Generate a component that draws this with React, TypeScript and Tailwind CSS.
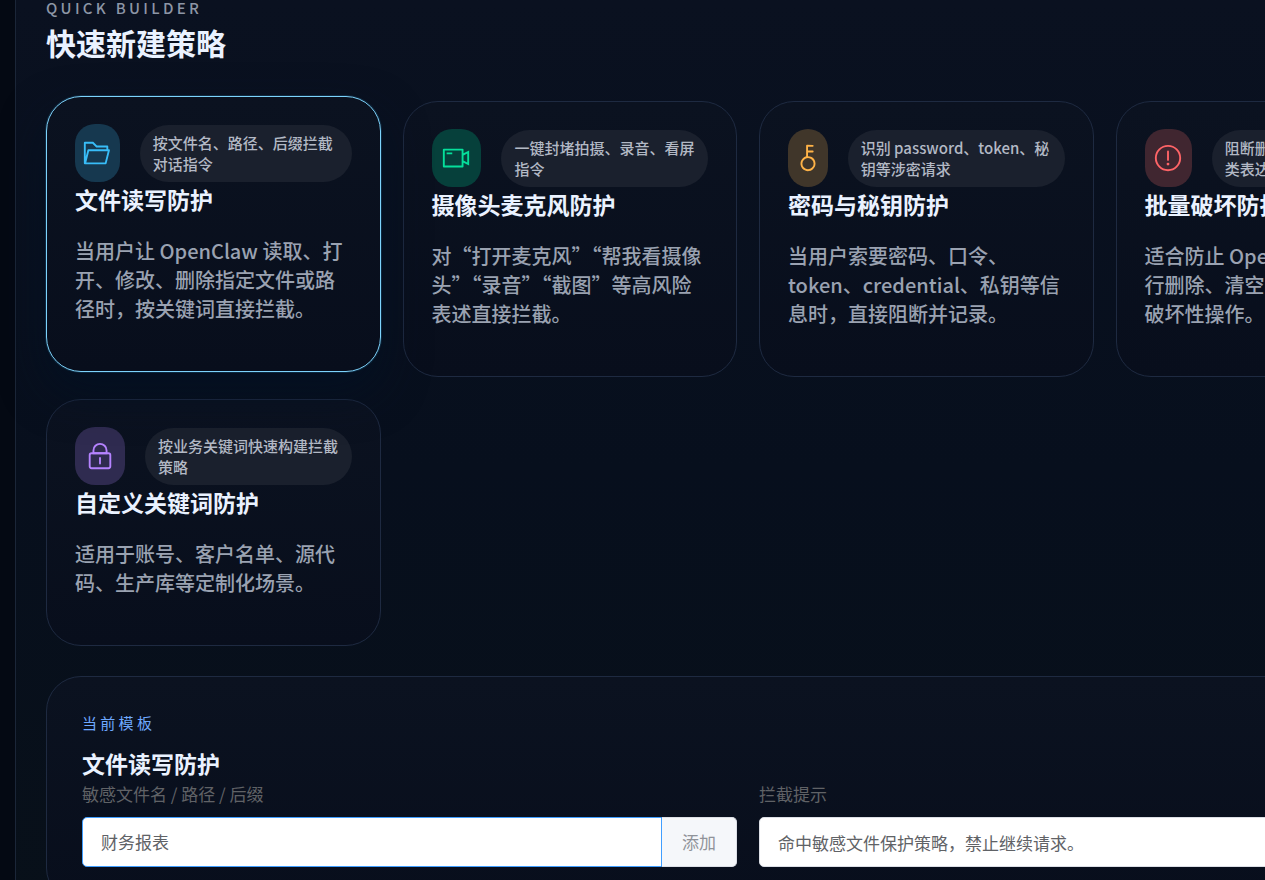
import { useState } from "react";

type Template = {
  id: string;
  title: string;
  tag: string;
  description: string;
  tone: string;
  paths: string[];
};

const templates: Template[] = [
  {
    id: "file",
    title: "文件读写防护",
    tag: "按文件名、路径、后缀拦截对话指令",
    description: "当用户让 OpenClaw 读取、打开、修改、删除指定文件或路径时，按关键词直接拦截。",
    tone: "bg-[#16384f] text-[#38bdf8]",
    paths: [
      "M878.08 448H241.92l-96 384h636.16l96-384zM832 384v-64H485.76L357.504 192H128v448l57.92-231.744A32 32 0 0 1 216.96 384zm-24.96 512H96a32 32 0 0 1-32-32V160a32 32 0 0 1 32-32h287.872l128.384 128H864a32 32 0 0 1 32 32v96h23.04a32 32 0 0 1 31.04 39.744l-112 448A32 32 0 0 1 807.04 896",
    ],
  },
  {
    id: "camera",
    title: "摄像头麦克风防护",
    tag: "一键封堵拍摄、录音、看屏指令",
    description: "对“打开麦克风”“帮我看摄像头”“录音”“截图”等高风险表述直接拦截。",
    tone: "bg-[#06403b] text-[#05df9b]",
    paths: [
      "M704 768V256H128v512zm64-416 192-96v512l-192-96v128a32 32 0 0 1-32 32H96a32 32 0 0 1-32-32V224a32 32 0 0 1 32-32h640a32 32 0 0 1 32 32zm0 71.552v176.896l128 64V359.552zM192 320h192v64H192z",
    ],
  },
  {
    id: "secret",
    title: "密码与秘钥防护",
    tag: "识别 password、token、秘钥等涉密请求",
    description: "当用户索要密码、口令、token、credential、私钥等信息时，直接阻断并记录。",
    tone: "bg-[#40362a] text-[#ffb347]",
    paths: [
      "M448 456.064V96a32 32 0 0 1 32-32.064L672 64a32 32 0 0 1 0 64H512v128h160a32 32 0 0 1 0 64H512v128a256 256 0 1 1-64 8.064M512 896a192 192 0 1 0 0-384 192 192 0 0 0 0 384",
    ],
  },
  {
    id: "destroy",
    title: "批量破坏防护",
    tag: "阻断删除、清空、格式化等类表达",
    description: "适合防止 OpenClaw 被诱导执行删除、清空、格式化等批量破坏性操作。",
    tone: "bg-[#402630] text-[#ff6467]",
    paths: [
      "M512 64a448 448 0 1 1 0 896 448 448 0 0 1 0-896m0 832a384 384 0 0 0 0-768 384 384 0 0 0 0 768m48-176a48 48 0 1 1-96 0 48 48 0 0 1 96 0m-48-464a32 32 0 0 1 32 32v288a32 32 0 0 1-64 0V288a32 32 0 0 1 32-32",
    ],
  },
  {
    id: "custom",
    title: "自定义关键词防护",
    tag: "按业务关键词快速构建拦截策略",
    description: "适用于账号、客户名单、源代码、生产库等定制化场景。",
    tone: "bg-[#2f2b50] text-[#b583ff]",
    paths: [
      "M224 448a32 32 0 0 0-32 32v384a32 32 0 0 0 32 32h576a32 32 0 0 0 32-32V480a32 32 0 0 0-32-32zm0-64h576a96 96 0 0 1 96 96v384a96 96 0 0 1-96 96H224a96 96 0 0 1-96-96V480a96 96 0 0 1 96-96",
      "M512 544a32 32 0 0 1 32 32v192a32 32 0 1 1-64 0V576a32 32 0 0 1 32-32m192-160v-64a192 192 0 1 0-384 0v64zM512 64a256 256 0 0 1 256 256v128H256V320A256 256 0 0 1 512 64",
    ],
  },
];

function TemplateCard({
  template,
  active,
  onSelect,
}: {
  template: Template;
  active: boolean;
  onSelect: () => void;
}) {
  return (
    <button
      type="button"
      aria-pressed={active}
      onClick={onSelect}
      className={`flex flex-col rounded-[35px] border bg-linear-to-b from-[#0b1220] to-[#080e1c] px-7 pt-[27px] pb-12 text-left transition ${
        active
          ? "-translate-y-[5px] border-[#7dd3fc] shadow-[0_0_0_1px_rgba(56,189,248,0.15),0_20px_45px_rgba(2,16,36,0.6)]"
          : "border-[#1e2a41]"
      }`}
    >
      <span className="flex w-full items-end justify-between gap-5">
        <span
          className={`flex h-[58px] w-[58px] items-center justify-center rounded-[20px] ${template.tone}`}
        >
          <svg viewBox="0 0 1024 1024" className="size-[30px] shrink-0" fill="currentColor" aria-hidden="true">
            {template.paths.map((d) => (
              <path key={d} d={d} />
            ))}
          </svg>
        </span>
        <span className="rounded-full bg-[#1a202d] px-[13px] pt-[7px] pb-2 text-[15px] leading-[21px] font-medium text-[#b3b9c5]">
          {template.tag}
        </span>
      </span>
      <strong className="text-[23px] leading-[34px] font-bold text-[#eaf2ff]">{template.title}</strong>
      <span className="mt-5 text-[20px] leading-[29px] font-medium text-[#9aa2b1]">{template.description}</span>
    </button>
  );
}

export default function App() {
  const [selected, setSelected] = useState("file");
  const [keyword, setKeyword] = useState("财务报表");
  const [message, setMessage] = useState("命中敏感文件保护策略，禁止继续请求。");
  const current = templates.find((t) => t.id === selected) ?? templates[0];

  return (
    <main
      lang="zh-CN"
      className="h-screen overflow-hidden bg-[#040913] pl-[15px] font-['Noto_Sans_CJK_SC',sans-serif]"
    >
      <section className="-mr-[215px] min-h-screen border-l border-[#1b2638] bg-linear-to-b from-[#0a1120] via-[#070f1d] to-[#081019] px-[30px] pb-8">
        <p className="text-[15px] leading-4 font-medium tracking-[0.22em] text-[#8d96a6]">QUICK BUILDER</p>
        <h2 className="mt-2 text-[30px] leading-9 font-bold text-[#eaf2ff]">快速新建策略</h2>

        <div className="mt-[41px] grid grid-cols-4 items-start gap-[22px]">
          {templates.map((t) => (
            <TemplateCard key={t.id} template={t} active={t.id === selected} onSelect={() => setSelected(t.id)} />
          ))}
        </div>

        <div className="mt-[30px] rounded-[35px] border border-[#1e2a41] bg-linear-to-b from-[#0b1220] to-[#080e1c] p-[35px]">
          <p className="text-[15px] leading-[22px] tracking-[0.22em] text-[#6ea8fe]">当前模板</p>
          <h3 className="mt-3 text-[23px] leading-[34px] font-bold text-[#eaf2ff]">{current.title}</h3>
          <form className="grid grid-cols-2 gap-[22px]" onSubmit={(e) => e.preventDefault()}>
            <div>
              <label htmlFor="keyword" className="block text-[17px] leading-7 text-[#606266]">
                敏感文件名 / 路径 / 后缀
              </label>
              <div className="mt-[9px] flex h-[50px]">
                <input
                  id="keyword"
                  value={keyword}
                  onChange={(e) => setKeyword(e.target.value)}
                  className="min-w-0 flex-1 rounded-l-[5px] border border-[#409eff] bg-white px-[18px] text-[17px] text-[#606266] outline-none"
                />
                <button
                  type="button"
                  className="w-[75px] rounded-r-[5px] border border-l-0 border-[#dcdfe6] bg-[#f5f7fa] text-[17px] text-[#909399]"
                >
                  添加
                </button>
              </div>
            </div>
            <div>
              <label htmlFor="message" className="block text-[17px] leading-7 text-[#606266]">
                拦截提示
              </label>
              <input
                id="message"
                value={message}
                onChange={(e) => setMessage(e.target.value)}
                className="mt-[9px] h-[50px] w-full rounded-[5px] border border-[#dcdfe6] bg-white px-[18px] text-[17px] text-[#606266] outline-none"
              />
            </div>
          </form>
        </div>
      </section>
    </main>
  );
}
